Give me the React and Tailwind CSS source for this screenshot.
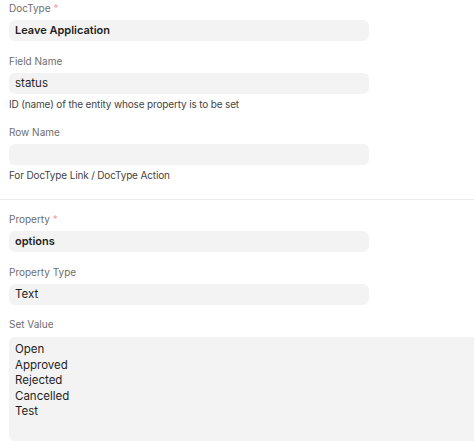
export default function App() {
  const font = { fontFamily: "Inter, 'Noto Sans', sans-serif" };
  const Label = ({ children, req }) => (
    <div className="text-[10px] leading-[14px] text-[#6e6e6e]">
      {children}
      {req && <span className="text-[#f0a0a0]"> *</span>}
    </div>
  );
  const Input = ({ children, bold }) => (
    <div
      className={`mt-[5px] h-[21px] w-[360px] rounded-[6px] bg-[#f3f3f3] px-[6px] flex items-center text-[#1f1f1f] ${bold ? "text-[11px] font-semibold" : "text-[11.5px]"}`}
    >
      {children}
    </div>
  );
  const Desc = ({ children }) => (
    <div className="mt-[3px] text-[10px] tracking-[-0.15px] leading-[14px] text-[#444444]">{children}</div>
  );
  return (
    <div className="w-[474px] h-[441px] overflow-hidden bg-white" style={font}>
      <div className="pl-[9px] pt-[1px]">
        <Label req>DocType</Label>
        <Input bold>Leave Application</Input>
        <div className="mt-[13px]">
          <Label>Field Name</Label>
          <Input>status</Input>
          <Desc>ID (name) of the entity whose property is to be set</Desc>
        </div>
        <div className="mt-[14px]">
          <Label>Row Name</Label>
          <Input></Input>
          <Desc>For DocType Link / DocType Action</Desc>
        </div>
      </div>
      <div className="mt-[17px] border-t border-[#ececec]"></div>
      <div className="pl-[9px] pt-[12px]">
        <Label req>Property</Label>
        <Input bold>options</Input>
        <div className="mt-[13px]">
          <Label>Property Type</Label>
          <Input>Text</Input>
        </div>
        <div className="mt-[12px]">
          <Label>Set Value</Label>
          <div className="mt-[6px] h-[104px] rounded-l-[6px] bg-[#f3f3f3] px-[6px] pt-[5px] text-[11.5px] leading-[15.5px] text-[#1f1f1f]">
            <div>Open</div>
            <div>Approved</div>
            <div>Rejected</div>
            <div>Cancelled</div>
            <div>Test</div>
          </div>
        </div>
      </div>
    </div>
  );
}
